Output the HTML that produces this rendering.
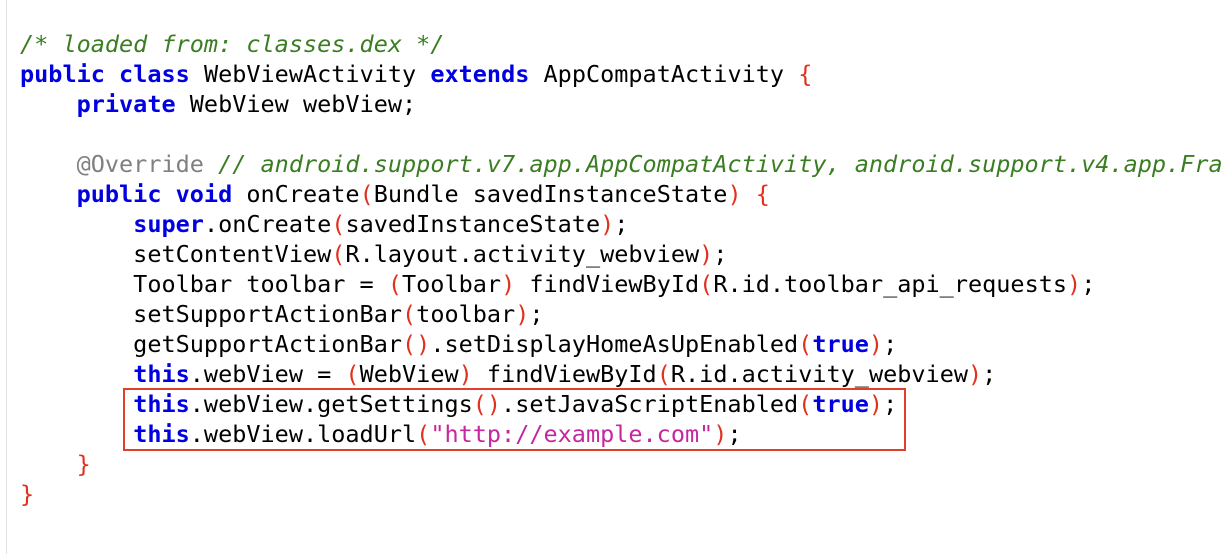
<!DOCTYPE html>
<html><head><meta charset="utf-8"><style>
html,body{margin:0;padding:0;background:#fff;width:1222px;height:554px;overflow:hidden;position:relative}
.rule{position:absolute;left:6px;top:0;width:1px;height:554px;background:#e2e2e2}
pre{position:absolute;left:20px;top:29px;width:1202px;overflow:hidden;margin:0;font-family:"DejaVu Sans Mono","Liberation Mono",monospace;font-size:23.5px;line-height:30px;color:#000;white-space:pre}
.k{color:#0000e0;font-weight:bold}
.c{color:#3b7d23;font-style:italic}
.p{color:#e0301e}
.s{color:#c5289c}
.a{color:#808080}
.box{position:absolute;left:123px;top:388px;width:779px;height:59px;border:2px solid #e0402a}
</style></head><body>
<div class="rule"></div>
<pre><span class="c">/* loaded from: classes.dex */</span>
<span class="k">public</span> <span class="k">class</span> WebViewActivity <span class="k">extends</span> AppCompatActivity <span class="p">{</span>
    <span class="k">private</span> WebView webView;

    <span class="a">@Override</span> <span class="c">// android.support.v7.app.AppCompatActivity, android.support.v4.app.Frag</span>
    <span class="k">public</span> <span class="k">void</span> onCreate<span class="p">(</span>Bundle savedInstanceState<span class="p">)</span> <span class="p">{</span>
        <span class="k">super</span>.onCreate<span class="p">(</span>savedInstanceState<span class="p">)</span>;
        setContentView<span class="p">(</span>R.layout.activity_webview<span class="p">)</span>;
        Toolbar toolbar = <span class="p">(</span>Toolbar<span class="p">)</span> findViewById<span class="p">(</span>R.id.toolbar_api_requests<span class="p">)</span>;
        setSupportActionBar<span class="p">(</span>toolbar<span class="p">)</span>;
        getSupportActionBar<span class="p">()</span>.setDisplayHomeAsUpEnabled<span class="p">(</span><span class="k">true</span><span class="p">)</span>;
        <span class="k">this</span>.webView = <span class="p">(</span>WebView<span class="p">)</span> findViewById<span class="p">(</span>R.id.activity_webview<span class="p">)</span>;
        <span class="k">this</span>.webView.getSettings<span class="p">()</span>.setJavaScriptEnabled<span class="p">(</span><span class="k">true</span><span class="p">)</span>;
        <span class="k">this</span>.webView.loadUrl<span class="p">(</span><span class="s">"http://example.com"</span><span class="p">)</span>;
    <span class="p">}</span>
<span class="p">}</span></pre>
<div class="box"></div>
</body></html>
